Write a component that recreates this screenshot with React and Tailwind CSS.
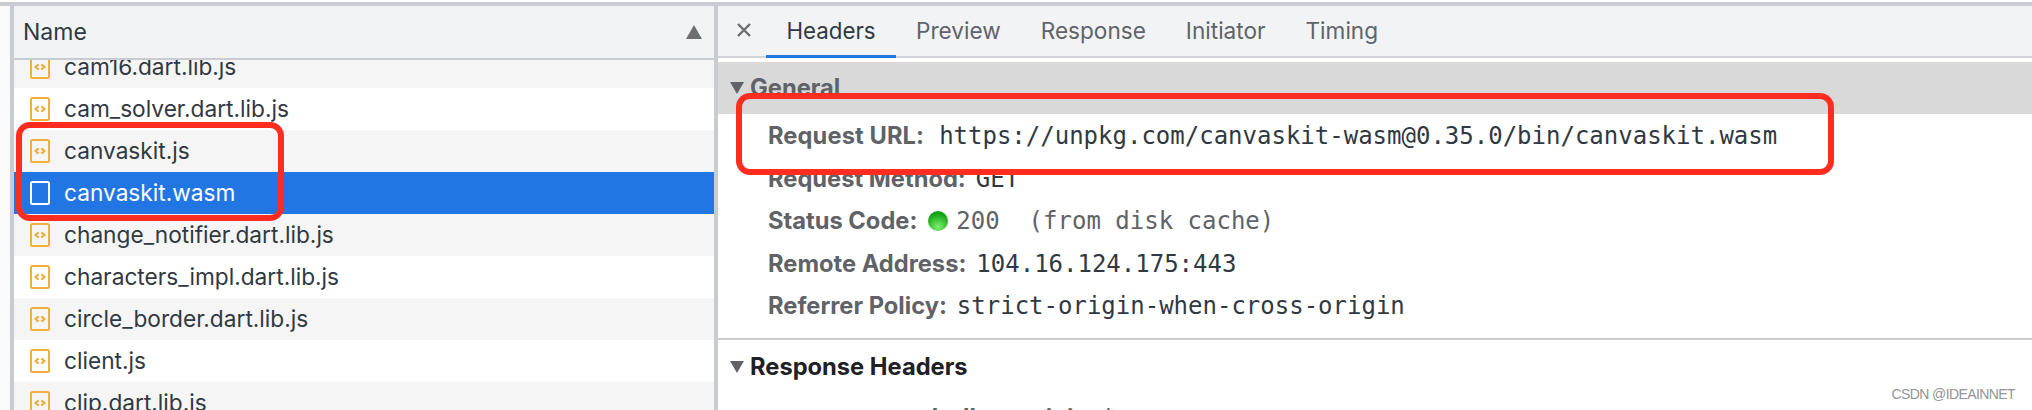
const files = [
  { name: 'cam16.dart.lib.js', bg: 'bg-[#f5f5f5]' },
  { name: 'cam_solver.dart.lib.js', bg: 'bg-white' },
  { name: 'canvaskit.js', bg: 'bg-[#f5f5f5]' },
  { name: 'canvaskit.wasm', bg: 'bg-[#2176e4]', selected: true },
  { name: 'change_notifier.dart.lib.js', bg: 'bg-[#f5f5f5]' },
  { name: 'characters_impl.dart.lib.js', bg: 'bg-white' },
  { name: 'circle_border.dart.lib.js', bg: 'bg-[#f5f5f5]' },
  { name: 'client.js', bg: 'bg-white' },
  { name: 'clip.dart.lib.js', bg: 'bg-[#f5f5f5]' },
];

const tabs = ['Preview', 'Response', 'Initiator', 'Timing'];

function FileIcon({ selected }) {
  const color = selected ? '#ffffff' : '#f0ae3a';
  return (
    <svg width="20" height="24" viewBox="0 0 20 24" className="shrink-0">
      <rect x="1" y="1" width="18" height="22" rx="1.5" fill="none" stroke={color} strokeWidth="2" />
      {!selected && (
        <path d="M8.6 9.4 L5.6 12 L8.6 14.6 M11.4 9.4 L14.4 12 L11.4 14.6" fill="none" stroke={color} strokeWidth="2.2" />
      )}
    </svg>
  );
}

function Arrow() {
  return (
    <svg width="14" height="12" viewBox="0 0 14 12" className="shrink-0">
      <path d="M0 0 H14 L7 12 Z" fill="#5f6368" />
    </svg>
  );
}

function Field({ label, wide, children }) {
  return (
    <div className="flex h-[42.5px] items-center whitespace-pre pl-[50px]">
      <span className={`text-[23.7px] font-bold text-[#5f6368] ${wide ? 'mr-[15px] tracking-[0.1px]' : 'mr-[10px]'}`}>{label}</span>
      {children}
    </div>
  );
}

const mono = "font-['DejaVu_Sans_Mono',monospace] text-[24px]";

export default function App() {
  return (
    <div className="relative h-[410px] w-[2032px] overflow-hidden bg-white font-['Inter','Liberation_Sans',sans-serif]">
      <div className="flex h-[6px] border-b-4 border-[#c8ccd1] bg-white" />
      <div className="flex h-[404px]">
        <div className="w-[10px] bg-[#fafafa]" />
        <div className="flex w-[708px] flex-col border-x-4 border-[#c8ccd1]">
          <div className="flex h-[54px] shrink-0 items-center justify-between border-b-2 border-[#c8ccd1] bg-[#f1f3f5] pl-[9px] pr-[12px]">
            <span className="text-[23px] text-[#303942]">Name</span>
            <svg width="16" height="14" viewBox="0 0 16 14">
              <path d="M8 0 L16 14 H0 Z" fill="#6e6e6e" />
            </svg>
          </div>
          <div className="flex-1 overflow-hidden">
            <div className="-mt-[14px]">
              {files.map((f) => (
                <div key={f.name} className={`flex h-[42px] items-center gap-[14px] pl-[16px] ${f.bg}`}>
                  <FileIcon selected={f.selected} />
                  <span className={`text-[22.7px] ${f.selected ? 'text-white' : 'text-[#303942]'}`}>{f.name}</span>
                </div>
              ))}
            </div>
          </div>
        </div>
        <div className="flex min-w-0 flex-1 flex-col">
          <div className="flex h-[52px] shrink-0 items-stretch border-b-2 border-[#d0d3d7] bg-[#f1f3f5]">
            <div className="flex w-[48px] items-center justify-center pb-[2px] pl-[4px]">
              <svg width="14" height="14" viewBox="0 0 14 14">
                <path d="M1 1 L13 13 M13 1 L1 13" stroke="#6e6e6e" strokeWidth="2.4" />
              </svg>
            </div>
            <div className="-mb-[2px] flex w-[130px] items-center justify-center border-b-[3px] border-[#2176e4] text-[22.3px] text-[#303942]">Headers</div>
            {tabs.map((t) => (
              <div key={t} className="flex items-center px-[20px] text-[22.6px] text-[#5f6368]">{t}</div>
            ))}
          </div>
          <div className="mt-[4px] flex h-[52px] shrink-0 items-center gap-[6px] bg-[#d9d9d9] pl-[12px]">
            <Arrow />
            <span className="text-[23.7px] font-bold text-[#5f6368]">General</span>
          </div>
          <div className="pt-[1px]">
            <Field label="Request URL:" wide>
              <span className={`${mono} text-[#303942]`}>https://unpkg.com/canvaskit-wasm@0.35.0/bin/canvaskit.wasm</span>
            </Field>
            <Field label="Request Method:">
              <span className={`${mono} text-[#303942]`}>GET</span>
            </Field>
            <div className="flex h-[42.5px] items-center whitespace-pre pl-[50px]">
              <span className="mr-[11px] text-[23.7px] font-bold text-[#5f6368]">Status Code:</span>
              <span className="mr-[8px] h-[20px] w-[20px] shrink-0 rounded-full bg-[radial-gradient(circle_at_50%_80%,#7cf06f,#12a312_72%)]" />
              <span className={`${mono} text-[#5f6368]`}>200  (from disk cache)</span>
            </div>
            <Field label="Remote Address:">
              <span className={`${mono} text-[#303942]`}>104.16.124.175:443</span>
            </Field>
            <Field label="Referrer Policy:">
              <span className={`${mono} text-[#303942]`}>strict-origin-when-cross-origin</span>
            </Field>
          </div>
          <div className="mt-[10px] flex h-[56px] shrink-0 items-center gap-[6px] border-t-2 border-[#c8ccd1] pl-[12px]">
            <Arrow />
            <span className="text-[23.7px] font-bold text-[#202124]">Response Headers</span>
          </div>
          <div className="whitespace-pre pl-[45px] pt-[6px] text-[23.7px] font-bold text-[#5f6368]">access-control-allow-origin: *</div>
        </div>
      </div>

      {/* red annotation boxes */}
      <div className="absolute left-[16px] top-[122px] h-[99px] w-[268px] rounded-[14px] border-[6px] border-[#fe2d20]" />
      <div className="absolute left-[736px] top-[93px] h-[82px] w-[1098px] rounded-[14px] border-[6px] border-[#fe2d20]" />

      <span className="absolute right-[17px] top-[384px] font-['Liberation_Sans',sans-serif] text-[14px] tracking-[-0.6px] text-[#949494]">CSDN @IDEAINNET</span>
    </div>
  );
}
